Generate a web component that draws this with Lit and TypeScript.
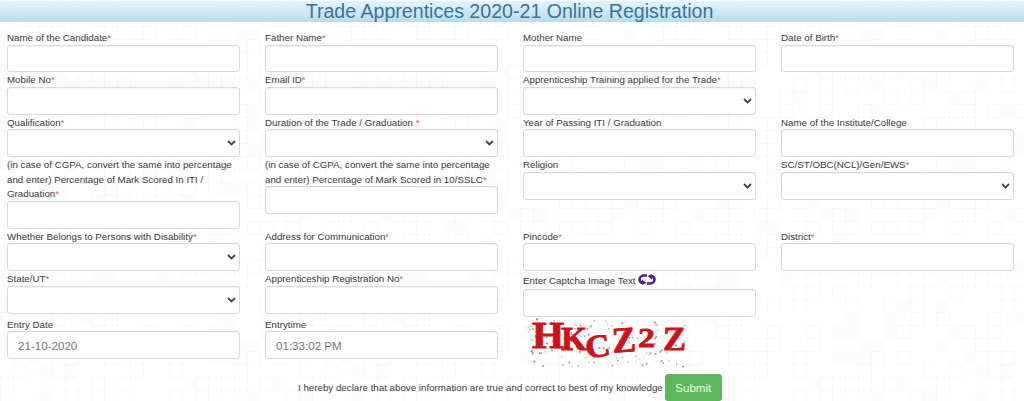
import { LitElement, html, css, svg } from "lit";
import { customElement } from "lit/decorators.js";

type Field = { label: string; req?: boolean; kind?: "select" | "input" | "captcha"; value?: string };

const fields: Field[] = [
  { label: "Name of the Candidate", req: true },
  { label: "Father Name", req: true },
  { label: "Mother Name" },
  { label: "Date of Birth", req: true },
  { label: "Mobile No", req: true },
  { label: "Email ID", req: true },
  { label: "Apprenticeship Training applied for the Trade", req: true, kind: "select" },
  { label: "" },
  { label: "Qualification", req: true, kind: "select" },
  { label: "Duration of the Trade / Graduation ", req: true, kind: "select" },
  { label: "Year of Passing ITI / Graduation" },
  { label: "Name of the Institute/College" },
  { label: "(in case of CGPA, convert the same into percentage and enter) Percentage of Mark Scored In ITI / Graduation", req: true },
  { label: "(in case of CGPA, convert the same into percentage and enter) Percentage of Mark Scored in 10/SSLC", req: true },
  { label: "Religion", kind: "select" },
  { label: "SC/ST/OBC(NCL)/Gen/EWS", req: true, kind: "select" },
  { label: "Whether Belongs to Persons with Disability", req: true, kind: "select" },
  { label: "Address for Communication", req: true },
  { label: "Pincode", req: true },
  { label: "District", req: true },
  { label: "State/UT", req: true, kind: "select" },
  { label: "Apprenticeship Registration No", req: true },
  { label: "Enter Captcha Image Text", kind: "captcha" },
  { label: "" },
  { label: "Entry Date", value: "21-10-2020" },
  { label: "Entrytime", value: "01:33:02 PM" },
];

function rng(seed: number) {
  let s = seed;
  return () => {
    s = (s * 1664525 + 1013904223) % 4294967296;
    return s / 4294967296;
  };
}

const dotRand = rng(11);
const dots = Array.from({ length: 170 }, () => {
  const x = 5 + dotRand() * 158;
  const y = 1 + dotRand() * 48;
  const r = 0.35 + dotRand() * 0.75;
  return svg`<circle cx=${x.toFixed(1)} cy=${y.toFixed(1)} r=${r.toFixed(2)} fill="#9a9a9a" />`;
});

const CELL = 13;
const TILE = 24;
const bgRand = rng(7);
let outline = "";
let filled = "";
for (let row = 0; row < TILE; row++) {
  for (let col = 0; col < TILE; col++) {
    const v = bgRand();
    const x = col * CELL + 0.5;
    const y = row * CELL + 0.5;
    if (v < 0.3) outline += `M${x} ${y}h${CELL}v${CELL}h-${CELL}z`;
    else if (v < 0.42) filled += `M${x} ${y}h${CELL}v${CELL}h-${CELL}z`;
  }
}

@customElement("app-root")
export class AppRoot extends LitElement {
  static styles = css`
    :host {
      display: block;
      width: 1024px;
      height: 401px;
      overflow: hidden;
      position: relative;
      background-color: #fefefe;
      font-family: "Liberation Sans", Arial, sans-serif;
      font-size: 9.75px;
      color: #3a3a3a;
    }
    .pattern {
      position: absolute;
      inset: 0;
      width: 100%;
      height: 100%;
    }
    .page {
      position: relative;
    }
    h1 {
      margin: 1px 0 0;
      height: 21px;
      line-height: 21px;
      padding-right: 5px;
      text-align: center;
      font-size: 19.6px;
      font-weight: 400;
      color: #3a7596;
      background: linear-gradient(to bottom, #e6f3f9, #b7dcec);
    }
    .grid {
      display: grid;
      grid-template-columns: repeat(4, 233px);
      column-gap: 25px;
      padding: 8px 0 0 7px;
      align-items: start;
    }
    .field {
      display: flex;
      flex-direction: column;
    }
    .label {
      line-height: 14.6px;
      padding-top: 1px;
      margin-bottom: -1px;
    }
    .req {
      color: #f2506a;
    }
    .ctl {
      box-sizing: border-box;
      width: 233px;
      height: 27.8px;
      background: #fff;
      border: 1px solid #d9d9d9;
      border-radius: 3px;
      box-shadow: inset 0 1px 1px rgba(0, 0, 0, 0.05);
      position: relative;
      display: flex;
      align-items: center;
      padding: 0 10px;
      font-size: 11.6px;
      color: #777;
    }
    .chev {
      position: absolute;
      right: 3px;
      top: 10px;
      width: 9px;
      height: 6px;
    }
    .captcha-label {
      display: flex;
      align-items: flex-end;
      height: 17.8px;
      line-height: 14.6px;
    }
    .refresh {
      width: 18px;
      height: 11px;
      margin: 0 0 4px 2px;
    }
    .cap-cell {
      padding-top: 1px;
    }
    .cap-img {
      display: block;
      width: 165px;
      height: 50px;
    }
    .footer {
      display: flex;
      align-items: center;
      margin-top: 6px;
      padding-left: 298px;
      white-space: nowrap;
    }
    .btn {
      width: 57px;
      height: 27px;
      margin-left: 2px;
      background: #5cb85c;
      color: #eef8ee;
      border: 0;
      border-radius: 3px;
      font: 11.6px "Liberation Sans", Arial, sans-serif;
      padding: 0;
    }
  `;

  private ctl(f: Field) {
    const chev = f.kind === "select"
      ? html`<svg class="chev" viewBox="0 0 9 6"><path d="M1 1l3.500 3.500L8 1" fill="none" stroke="#444" stroke-width="1.800" /></svg>`
      : null;
    return html`<div class="ctl">${f.value ?? ""}${chev}</div>`;
  }

  private field(f: Field) {
    if (f.label === "") return html`<div></div>`;
    if (f.kind === "captcha") {
      return html`<div class="field">
        <div class="captcha-label">
          <span>${f.label}</span>
          <svg class="refresh" viewBox="0 0 18 11" fill="none" stroke="#52208a" stroke-width="2.600">
            <path d="M9 1.500H6C3.500 1.500 1.500 3.200 1.500 5.500C1.500 7.500 3 8.800 5 9" />
            <path d="M9 9.500h3c2.500 0 4.500-1.700 4.500-4 0-2-1.500-3.300-3.500-3.500" />
            <path d="M4 5.500L8.500 9 4 11z" fill="#52208a" stroke="none" />
            <path d="M14 5.500L9.500 2 14 0z" fill="#52208a" stroke="none" />
          </svg>
        </div>
        ${this.ctl({ label: "" })}
      </div>`;
    }
    return html`<div class="field">
      <div class="label">${f.label}${f.req ? html`<span class="req">*</span>` : null}</div>
      ${this.ctl(f)}
    </div>`;
  }

  render() {
    return html`
      <svg class="pattern" aria-hidden="true">
        <defs>
          <pattern id="bg" width=${CELL * TILE} height=${CELL * TILE} patternUnits="userSpaceOnUse">
            <path d=${filled} fill="#fcfcfc" />
            <path d=${outline} fill="none" stroke="#f7f7f7" />
          </pattern>
        </defs>
        <rect width="100%" height="100%" fill="url(#bg)" />
      </svg>
      <div class="page">
        <h1>Trade Apprentices 2020-21 Online Registration</h1>
        <div class="grid">
          ${fields.map((f) => this.field(f))}
          <div class="cap-cell">
            <svg class="cap-img" viewBox="0 0 165 50">
              ${dots}
              <g fill="#cc1418" stroke="#cc1418" stroke-width="0.800" font-family="Liberation Serif, serif" font-weight="700">
                <text x="9" y="30" font-size="37" textLength="32" lengthAdjust="spacingAndGlyphs">H</text>
                <text x="38" y="32" font-size="33" textLength="26" lengthAdjust="spacingAndGlyphs">K</text>
                <text x="62" y="39" font-size="32" textLength="25" lengthAdjust="spacingAndGlyphs" transform="rotate(-8 74 28)">C</text>
                <text x="89" y="34" font-size="36" textLength="24" lengthAdjust="spacingAndGlyphs" transform="rotate(-4 100 22)">Z</text>
                <text x="115" y="29" font-size="28" textLength="17" lengthAdjust="spacingAndGlyphs">2</text>
                <text x="140" y="32" font-size="33" textLength="23" lengthAdjust="spacingAndGlyphs">Z</text>
              </g>
            </svg>
          </div>
        </div>
        <div class="footer">
          <span>I hereby declare that above information are true and correct to best of my knowledge</span>
          <button class="btn">Submit</button>
        </div>
      </div>
    `;
  }
}
